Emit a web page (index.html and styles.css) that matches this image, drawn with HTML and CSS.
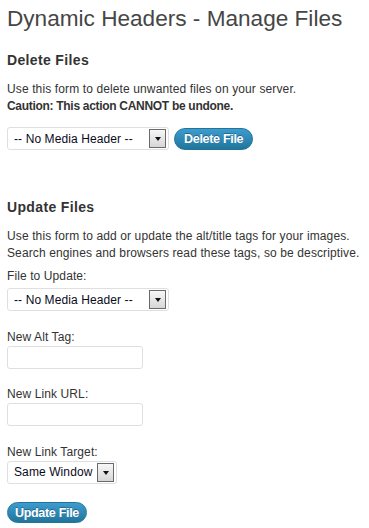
FILE: index.html
```html
<!DOCTYPE html>
<html>
<head>
<meta charset="utf-8">
<link rel="stylesheet" href="styles.css">
</head>
<body>
<div class="wrap">
  <h1 class="title">Dynamic Headers - Manage Files</h1>

  <h2 class="section-title">Delete Files</h2>
  <p class="intro">Use this form to delete unwanted files on your server.<br><strong class="caution">Caution: This action CANNOT be undone.</strong></p>
  <form class="delete-row">
    <div class="select select-wide">
      <select><option>-- No Media Header --</option></select>
      <span class="arrow"></span>
    </div>
    <button type="button" class="button">Delete File</button>
  </form>

  <h2 class="section-title section-gap">Update Files</h2>
  <p class="intro">Use this form to add or update the alt/title tags for your images. Search engines and browsers read these tags, so be descriptive.</p>
  <form class="update-form">
    <div class="field field-first">
      <label class="field-label">File to Update:</label>
      <div class="select select-wide select-first">
        <select><option>-- No Media Header --</option></select>
        <span class="arrow"></span>
      </div>
    </div>
    <div class="field">
      <label class="field-label">New Alt Tag:</label>
      <input class="text-input" type="text">
    </div>
    <div class="field">
      <label class="field-label">New Link URL:</label>
      <input class="text-input" type="text">
    </div>
    <div class="field">
      <label class="field-label">New Link Target:</label>
      <div class="select">
        <select><option>Same Window</option></select>
        <span class="arrow"></span>
      </div>
    </div>
    <button type="button" class="button submit">Update File</button>
  </form>
</div>
</body>
</html>
```

FILE: styles.css
```css
html, body {
  margin: 0;
  padding: 0;
  background: #fff;
}
body {
  font-family: "Liberation Sans", Arial, sans-serif;
  font-size: 12px;
  line-height: 17px;
  color: #333;
}
.wrap {
  padding: 0 7px;
}
.title {
  margin: 5px 0 0;
  font-size: 22.6px;
  line-height: 28px;
  font-weight: normal;
  color: #464646;
}
.section-title {
  margin: 18px 0 0;
  font-size: 14px;
  line-height: 18px;
  font-weight: bold;
  letter-spacing: 0.35px;
  color: #333;
}
.section-gap {
  margin-top: 48px;
}
.intro {
  margin: 12px 0 0;
  letter-spacing: 0.12px;
}
.caution {
  letter-spacing: -0.3px;
}
.delete-row {
  margin: 12px 0 0;
  display: flex;
  align-items: center;
  gap: 5px;
}
.select {
  display: inline-flex;
  align-items: center;
  box-sizing: border-box;
  height: 23px;
  border: 1px solid #dfdfdf;
  border-radius: 3px;
  background: #fff;
  padding: 0 2px 0 6px;
}
.select-wide {
  width: 162px;
}
.select select {
  appearance: none;
  -webkit-appearance: none;
  border: 0;
  background: transparent;
  margin: 0;
  padding: 0;
  font-family: "Liberation Sans", Arial, sans-serif;
  font-size: 12px;
  letter-spacing: 0.1px;
  color: #0a0a1a;
  outline: none;
  flex: 1;
  min-width: 0;
}
.arrow {
  flex: none;
  box-sizing: border-box;
  width: 17px;
  height: 19px;
  margin-left: 4px;
  border: 1px solid #6a6a6a;
  background: linear-gradient(#f7f7f7, #d6d6d6);
  display: flex;
  align-items: center;
  justify-content: center;
}
.arrow::before {
  content: "";
  width: 0;
  height: 0;
  border-left: 3.5px solid transparent;
  border-right: 3.5px solid transparent;
  border-top: 4px solid #111;
  margin-top: 1px;
}
.button {
  box-sizing: border-box;
  height: 22px;
  padding: 0 9px;
  border: 1px solid #21759b;
  border-radius: 11px;
  background: linear-gradient(#3d9ccf, #21759b);
  color: #fff;
  font-family: "Liberation Sans", Arial, sans-serif;
  font-size: 12.5px;
  font-weight: bold;
  letter-spacing: -0.3px;
  text-shadow: 0 -1px 0 rgba(0,0,0,0.3);
  cursor: pointer;
}
.update-form {
  margin: 0;
}
.field {
  margin-top: 17.5px;
}
.field-first {
  margin-top: 6px;
}
.field-label {
  display: block;
  letter-spacing: 0.1px;
}
.select-first {
  margin-top: 3px;
}
.text-input {
  display: block;
  box-sizing: border-box;
  width: 136px;
  height: 23px;
  margin: 0;
  border: 1px solid #dfdfdf;
  border-radius: 3px;
  background: #fff;
  font-family: "Liberation Sans", Arial, sans-serif;
  font-size: 12px;
}
.submit {
  display: block;
  margin-top: 18.5px;
  height: 21px;
  width: 80px;
  padding: 0;
}
```
